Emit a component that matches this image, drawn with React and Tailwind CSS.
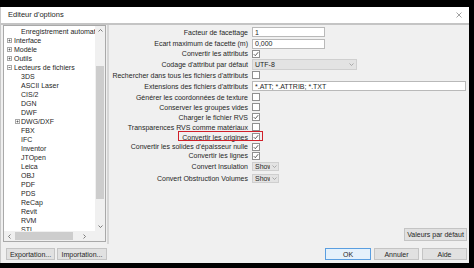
import React from "react";

const FONT = "font-['Liberation_Sans',Arial,sans-serif]";

const tree = [
  { label: "Enregistrement automati", level: 2 },
  { label: "Interface", level: 1, exp: "+" },
  { label: "Modèle", level: 1, exp: "+" },
  { label: "Outils", level: 1, exp: "+" },
  { label: "Lecteurs de fichiers", level: 1, exp: "-" },
  { label: "3DS", level: 2 },
  { label: "ASCII Laser", level: 2 },
  { label: "CIS/2", level: 2 },
  { label: "DGN", level: 2 },
  { label: "DWF", level: 2 },
  { label: "DWG/DXF", level: 2, exp: "+" },
  { label: "FBX", level: 2 },
  { label: "IFC", level: 2 },
  { label: "Inventor", level: 2 },
  { label: "JTOpen", level: 2 },
  { label: "Leica", level: 2 },
  { label: "OBJ", level: 2 },
  { label: "PDF", level: 2 },
  { label: "PDS", level: 2 },
  { label: "ReCap", level: 2 },
  { label: "Revit", level: 2 },
  { label: "RVM", level: 2 },
  { label: "STL", level: 2 },
];

const rows = [
  { label: "Facteur de facettage", h: "h-[12px]", kind: "input", w: "w-[73px]", value: "1" },
  { label: "Ecart maximum de facette (m)", h: "h-[11px]", kind: "input", w: "w-[73px]", value: "0,000" },
  { label: "Convertir les attributs", h: "h-[9px]", kind: "check", on: true },
  { label: "Codage d'attribut par défaut", h: "h-[12px]", kind: "select", w: "w-[105px]", value: "UTF-8" },
  { label: "Rechercher dans tous les fichiers d'attributs", h: "h-[10px]", kind: "check", on: false },
  { label: "Extensions des fichiers d'attributs", h: "h-[12px]", kind: "input", w: "w-[214px]", value: "*.ATT; *.ATTRIB; *.TXT" },
  { label: "Générer les coordonnées de texture", h: "h-[10px]", kind: "check", on: false },
  { label: "Conserver les groupes vides", h: "h-[10px]", kind: "check", on: false },
  { label: "Charger le fichier RVS", h: "h-[10px]", kind: "check", on: true },
  { label: "Transparences RVS comme matériaux", h: "h-[10px]", kind: "check", on: false },
  { label: "Convertir les origines", h: "h-[10px]", kind: "check", on: true, mark: true },
  { label: "Convertir les solides d'épaisseur nulle", h: "h-[9px]", kind: "check", on: true },
  { label: "Convertir les lignes", h: "h-[9px]", kind: "check", on: true },
  { label: "Convert Insulation", h: "h-[12px]", kind: "small" },
  { label: "Convert Obstruction Volumes", h: "h-[13px]", kind: "small" },
];

function Expander({ sign }) {
  return (
    <svg width="5" height="5" viewBox="0 0 5 5" className="shrink-0">
      <rect x="0.5" y="0.5" width="4" height="4" fill="white" stroke="#a8a8a8" />
      <line x1="1.5" y1="2.5" x2="3.5" y2="2.5" stroke="#555" strokeWidth="0.8" />
      {sign === "+" && <line x1="2.5" y1="1.5" x2="2.5" y2="3.5" stroke="#555" strokeWidth="0.8" />}
    </svg>
  );
}

function Chevron({ color = "#9a9a9a" }) {
  return (
    <svg width="5" height="3" viewBox="0 0 5 3">
      <path d="M0.5 0.5 L2.5 2.5 L4.5 0.5" fill="none" stroke={color} strokeWidth="0.8" />
    </svg>
  );
}

function Check({ on }) {
  return (
    <div className="w-[8px] h-[8px] border border-[#8f8f8f] bg-white flex items-center justify-center">
      {on && (
        <svg width="6" height="6" viewBox="0 0 6 6">
          <path d="M0.8 3.2 L2.3 4.7 L5.2 1.2" fill="none" stroke="#333" strokeWidth="0.8" />
        </svg>
      )}
    </div>
  );
}

function Control({ row }) {
  if (row.kind === "check") return <Check on={row.on} />;
  if (row.kind === "input")
    return (
      <div className={`${row.w} h-[10px] bg-white border border-[#b9b9b9] flex items-center px-[2px] leading-none`}>
        {row.value}
      </div>
    );
  if (row.kind === "select")
    return (
      <div className={`${row.w} h-[11px] bg-[#e3e3e3] border border-[#cfcfcf] flex items-center justify-between px-[2px] leading-none`}>
        <span>{row.value}</span>
        <Chevron />
      </div>
    );
  return (
    <div className="w-[27px] h-[9px] bg-[#e3e3e3] border border-[#cfcfcf] flex items-center justify-between pl-[2px] pr-[1px] leading-none">
      <span className="w-[15px] overflow-hidden whitespace-nowrap">Show</span>
      <Chevron />
    </div>
  );
}

function Btn({ children, w, primary }) {
  return (
    <div
      className={`${w} h-[12px] flex items-center justify-center leading-none border ${
        primary ? "border-[#5a9ee0] bg-[#e5f1fb]" : "border-[#c4c4c4] bg-[#e1e1e1]"
      }`}
    >
      {children}
    </div>
  );
}

export default function App() {
  return (
    <div className={`w-[474px] h-[268px] bg-black pt-[7px] overflow-hidden ${FONT} text-[7px] text-[#262626]`}>
      <div className="w-[469px] h-[256px] bg-[#f0f0f0] flex flex-col border-l border-[#c8c8c8]">
        {/* Title */}
        <div className="h-[18px] bg-white border-b-2 border-[#c4c4c4] flex items-center justify-between pl-[7px] pr-[7px] shrink-0">
          <span className="text-[7.5px]">Editeur d'options</span>
          <svg width="6" height="6" viewBox="0 0 6 6">
            <path d="M0.5 0.5 L5.5 5.5 M5.5 0.5 L0.5 5.5" stroke="#8a8a8a" strokeWidth="0.8" />
          </svg>
        </div>

        {/* Body */}
        <div className="flex h-[219px] shrink-0">
          {/* Tree */}
          <div className="ml-[2px] w-[103px] h-[217px] border border-[#a9a9a9] bg-white flex flex-col shrink-0">
            <div className="flex flex-1 min-h-0">
              <div className="flex-1 overflow-hidden pt-[1px]">
                {tree.map((t) => (
                  <div key={t.label} className="h-[9px] flex items-center whitespace-nowrap leading-none">
                    {t.level === 1 ? (
                      <div className="w-[10px] pl-[3px] shrink-0 flex items-center">
                        <Expander sign={t.exp} />
                      </div>
                    ) : (
                      <div className="w-[17px] pl-[11px] shrink-0 flex items-center">
                        {t.exp && <Expander sign={t.exp} />}
                      </div>
                    )}
                    <span>{t.label}</span>
                  </div>
                ))}
              </div>
              {/* vertical scrollbar */}
              <div className="w-[10px] bg-[#f0f0f0] flex flex-col items-center shrink-0">
                <div className="h-[9px] flex items-center justify-center">
                  <svg width="5" height="3" viewBox="0 0 5 3">
                    <path d="M0.5 2.5 L2.5 0.5 L4.5 2.5" fill="none" stroke="#606060" strokeWidth="0.8" />
                  </svg>
                </div>
                <div className="h-[31px]" />
                <div className="w-[8px] h-[133px] bg-[#cdcdcd]" />
                <div className="flex-1" />
                <div className="h-[9px] flex items-center justify-center">
                  <Chevron color="#606060" />
                </div>
              </div>
            </div>
            {/* horizontal scrollbar */}
            <div className="h-[10px] flex shrink-0">
              <div className="flex-1 bg-[#f0f0f0] flex items-center">
                <div className="w-[11px] flex justify-center">
                  <svg width="3" height="5" viewBox="0 0 3 5">
                    <path d="M2.5 0.5 L0.5 2.5 L2.5 4.5" fill="none" stroke="#606060" strokeWidth="0.8" />
                  </svg>
                </div>
                <div className="w-[58px] h-[8px] bg-[#cdcdcd]" />
                <div className="flex-1 flex justify-center">
                  <svg width="3" height="5" viewBox="0 0 3 5">
                    <path d="M0.5 0.5 L2.5 2.5 L0.5 4.5" fill="none" stroke="#606060" strokeWidth="0.8" />
                  </svg>
                </div>
              </div>
              <div className="w-[10px] bg-[#f0f0f0]" />
            </div>
          </div>

          {/* Options panel */}
          <div className="ml-[1px] flex-1 border-l-2 border-[#d6d6d6] flex flex-col pr-[2px]">
            <div className="pt-[1px]">
              {rows.map((r) => (
                <div key={r.label} className={`${r.h} flex items-center relative`}>
                  <div className="w-[139px] text-right whitespace-nowrap leading-none shrink-0">{r.label}</div>
                  <div className="ml-[4px] flex items-center">
                    <Control row={r} />
                  </div>
                  {r.mark && (
                    <div className="absolute left-[69px] top-[-1px] w-[85px] h-[10px] border-[1.5px] border-[#d0202a]" />
                  )}
                </div>
              ))}
            </div>
            <div className="flex-1" />
            <div className="flex justify-end mb-[3px]">
              <div className="w-[63px] h-[13px] flex items-center justify-center leading-none border border-[#c4c4c4] bg-[#e1e1e1]">
                Valeurs par défaut
              </div>
            </div>
          </div>
        </div>

        {/* Bottom buttons */}
        <div className="flex items-start pt-[4px] pl-[5px] pr-[2px]">
          <div className="flex gap-[2px]">
            <Btn w="w-[49px]">Exportation...</Btn>
            <Btn w="w-[50px]">Importation...</Btn>
          </div>
          <div className="flex-1" />
          <div className="flex gap-[3px]">
            <Btn w="w-[46px]" primary>OK</Btn>
            <Btn w="w-[45px]">Annuler</Btn>
            <Btn w="w-[45px]">Aide</Btn>
          </div>
        </div>
      </div>
    </div>
  );
}
